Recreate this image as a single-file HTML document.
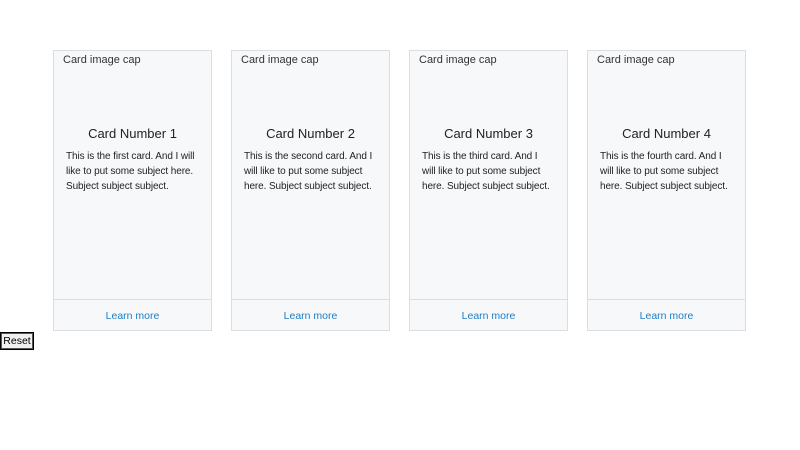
<!DOCTYPE html>
<html><head><style>
body{margin:0;background:#fff;font-family:"Liberation Sans",sans-serif;}
.card{position:absolute;top:50px;width:157px;height:279px;border:1px solid #dcdde0;background:#f7f8f9;box-sizing:content-box;}
.img{position:absolute;left:0;top:2px;font-size:11px;color:#333;white-space:nowrap;}
.img i{display:inline-block;width:9px;height:11px;vertical-align:-1px;}
.t{position:absolute;top:75px;left:0;width:100%;text-align:center;font-size:13px;color:#222;}
.p{position:absolute;top:98px;left:12px;width:140px;font-size:10px;letter-spacing:-0.1px;line-height:15px;color:#222;white-space:nowrap;}
.f{position:absolute;left:0;top:248px;width:100%;height:31px;border-top:1px solid #dcdde0;text-align:center;line-height:32px;font-size:10.5px;color:#1f7dc4;}
button{position:absolute;left:0;top:332px;width:34px;height:18px;padding:0;font-size:10.5px;font-family:"Liberation Sans",sans-serif;border:1px solid #000;background:#f0f0f0;box-shadow:inset 0 0 0 1px #555;}
</style></head><body>
<div class="card" style="left:53px"><div class="img"><i></i>Card image cap</div><div class="t">Card Number 1</div><div class="p">This is the first card. And I will<br>like to put some subject here.<br>Subject subject subject.</div><div class="f">Learn more</div></div>
<div class="card" style="left:231px"><div class="img"><i></i>Card image cap</div><div class="t">Card Number 2</div><div class="p">This is the second card. And I<br>will like to put some subject<br>here. Subject subject subject.</div><div class="f">Learn more</div></div>
<div class="card" style="left:409px"><div class="img"><i></i>Card image cap</div><div class="t">Card Number 3</div><div class="p">This is the third card. And I<br>will like to put some subject<br>here. Subject subject subject.</div><div class="f">Learn more</div></div>
<div class="card" style="left:587px"><div class="img"><i></i>Card image cap</div><div class="t">Card Number 4</div><div class="p">This is the fourth card. And I<br>will like to put some subject<br>here. Subject subject subject.</div><div class="f">Learn more</div></div>
<button>Reset</button>
</body></html>
